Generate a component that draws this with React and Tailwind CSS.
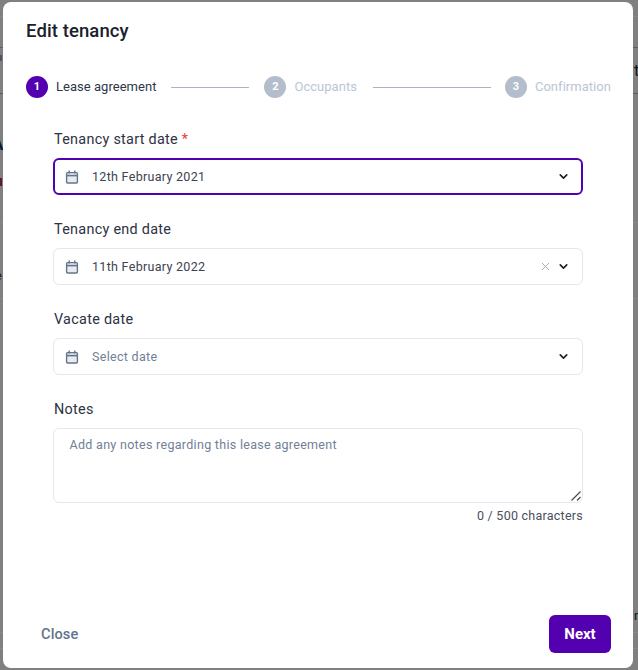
import React from 'react';
import { ChevronDown, X } from 'lucide-react';

const CalendarIcon = () => (
    <svg width="14" height="14" viewBox="0 0 14 14" fill="none" className="shrink-0">
        <rect x="1.6" y="2.6" width="10.8" height="10.4" rx="1" stroke="#64748b" strokeWidth="1.4" fill="#e8ecf2" />
        <path d="M1.5 5.6h11" stroke="#64748b" strokeWidth="1.6" />
        <path d="M4.2 0.6v2.8M9.8 0.6v2.8" stroke="#64748b" strokeWidth="1.4" />
    </svg>
);

const Paso = ({ numero, texto, activo }) => (
    <div className="flex items-center shrink-0">
        <div className={`w-[22px] h-[22px] rounded-full flex items-center justify-center text-white text-[11px] font-bold ${activo ? 'bg-[#5200b0]' : 'bg-[#b4bdcb]'}`}>
            {numero}
        </div>
        <span className={`ml-2 text-[13px] tracking-[0.03px] ${activo ? 'text-[#2d3748]' : 'text-[#bcc5d3]'}`}>{texto}</span>
    </div>
);

const CampoFecha = ({ etiqueta, valor, requerido, foco, limpiar, placeholder }) => (
    <div>
        <label className="block h-[21px] pl-px text-[14.4px] leading-[21px] tracking-[0.28px] text-[#2d3342]">
            {etiqueta}
            {requerido && <span className="text-[#e53e3e]"> *</span>}
        </label>
        <div className={`mt-[8px] h-[37px] flex items-center bg-white rounded-md ${foco ? 'border-2 border-[#5200b0] pl-[10px] pr-[11px]' : 'border border-[#e2e8f0] pl-[11px] pr-[12px]'}`}>
            <CalendarIcon />
            <span className={`ml-[13px] pt-px flex-1 text-[12.5px] tracking-[0.3px] ${placeholder ? 'text-[#718096]' : 'text-[#3c4352]'}`}>{valor}</span>
            {limpiar && <X size={13} strokeWidth={1.5} className="text-[#9a9a9a] mr-[5px]" />}
            <ChevronDown size={13} strokeWidth={3} className="text-[#1a202c]" />
        </div>
    </div>
);

export default function App() {
    return (
        <div className="relative w-[638px] h-[670px] overflow-hidden bg-[#808080] font-['Roboto',sans-serif]">
            {/* restos de la pagina detras del modal */}
            <div className="absolute inset-x-0 top-[16px] h-px bg-[#888888]" />
            <div className="absolute inset-x-0 top-[47px] h-px bg-[#5f5f5f]" />
            <div className="absolute inset-x-0 top-[93px] h-px bg-[#5c5c5c]" />
            <div className="absolute inset-x-0 top-[222px] h-px bg-[#888888]" />
            <div className="absolute inset-x-0 top-[298px] h-px bg-[#888888]" />
            <div className="absolute inset-x-0 top-[632px] h-px bg-[#888888]" />
            <div className="absolute inset-x-0 top-[648px] h-px bg-[#888888]" />
            <span className="absolute left-[634px] top-[61px] text-[16px] leading-[20px] text-[#11141a]">t</span>
            <span className="absolute left-[634px] top-[606px] text-[13px] leading-[20px] text-[#11141a]">n</span>
            <span className="absolute left-[-8px] top-[135px] text-[17px] leading-[18px] font-bold text-[#0d1a2c]">A</span>
            <div className="absolute left-0 top-[178px] w-[2px] h-[8px] bg-[#5c1c30]" />
            <span className="absolute left-[-5px] top-[267px] text-[13px] leading-[18px] text-[#1a202c]">e</span>
            <div className="absolute left-0 top-[55px] w-[2px] h-[6px] bg-[#4a5568]" />

            <div className="relative ml-[3px] mt-[2px] w-[630px] h-[666px] bg-white rounded-lg flex flex-col">
                <h1 className="pl-[23px] pt-[17px] text-[18.5px] leading-[24px] font-medium tracking-[0.1px] text-[#1a202c]">Edit tenancy</h1>

                <div className="flex items-center pl-[23px] mt-[33px]">
                    <Paso numero="1" texto="Lease agreement" activo />
                    <div className="ml-[15px] mr-[15px] w-[78px] h-px bg-[#aab4c4]" />
                    <Paso numero="2" texto="Occupants" />
                    <div className="ml-[16px] mr-[14px] w-[118px] h-px bg-[#aab4c4]" />
                    <Paso numero="3" texto="Confirmation" />
                </div>

                <div className="pl-[50px] pr-[50px] mt-[31px] flex flex-col gap-[24px]">
                    <CampoFecha etiqueta="Tenancy start date" valor="12th February 2021" requerido foco />
                    <CampoFecha etiqueta="Tenancy end date" valor="11th February 2022" limpiar />
                    <CampoFecha etiqueta="Vacate date" valor="Select date" placeholder />
                    <div>
                        <label className="block h-[21px] pl-px text-[14.4px] leading-[21px] tracking-[0.28px] text-[#2d3342]">Notes</label>
                        <div className="relative mt-[8px]">
                            <textarea
                                readOnly
                                placeholder="Add any notes regarding this lease agreement"
                                className="block w-full h-[75px] resize-none rounded-md border border-[#e2e8f0] px-[15.5px] py-[7px] text-[12.5px] tracking-[0.3px] placeholder:text-[#718096] outline-none"
                            />
                            <svg width="12" height="12" viewBox="0 0 12 12" className="absolute right-px bottom-px">
                                <path d="M1.5 10.5L10.5 1.5M7 10.5L10.5 7" stroke="#4a4a4a" strokeWidth="1.2" fill="none" />
                            </svg>
                        </div>
                        <p className="mt-[5px] text-right text-[12.5px] leading-[16px] tracking-[0.25px] text-[#4a5060]">0 / 500 characters</p>
                    </div>
                </div>

                <div className="mt-auto flex items-center justify-between pl-[38px] pr-[22px] pb-[15px]">
                    <button type="button" className="pt-[2px] text-[14.6px] font-medium tracking-[0.1px] text-[#64748b]">Close</button>
                    <button type="button" className="w-[62px] h-[38px] rounded-md bg-[#5200b0] text-white text-[15px] font-bold">Next</button>
                </div>
            </div>
        </div>
    );
}
